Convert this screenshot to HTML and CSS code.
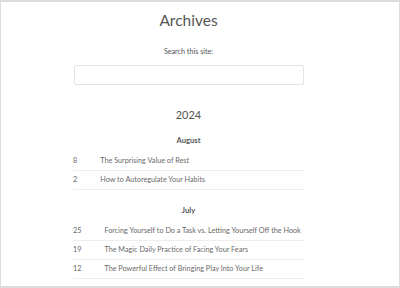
FILE: index.html
```html
<!DOCTYPE html>
<html lang="en">
  <head>
    <meta charset="UTF-8" />
    <title>Archives</title>
    <link rel="stylesheet" href="styles.css">
  </head>
  <body>
    <div class="page">
      <div class="content">
        <h1 class="title">Archives</h1>
        <form class="search">
          <label for="q">Search this site:</label>
          <input id="q" type="text">
        </form>

        <h2 class="year">2024</h2>

        <h3 class="month">August</h3>
        <table class="posts">
          <tr><td class="day">8</td><td><a href="#">The Surprising Value of Rest</a></td></tr>
          <tr><td class="day">2</td><td><a href="#">How to Autoregulate Your Habits</a></td></tr>
        </table>

        <h3 class="month">July</h3>
        <table class="posts">
          <tr><td class="day">25</td><td><a href="#">Forcing Yourself to Do a Task vs. Letting Yourself Off the Hook</a></td></tr>
          <tr><td class="day">19</td><td><a href="#">The Magic Daily Practice of Facing Your Fears</a></td></tr>
          <tr><td class="day">12</td><td><a href="#">The Powerful Effect of Bringing Play Into Your Life</a></td></tr>
        </table>
      </div>
    </div>
  </body>
</html>
```

FILE: styles.css
```css
html, body {
  margin: 0;
  height: 100%;
}
body {
  font-family: Lato, "Open Sans", sans-serif;
  color: #555;
  background-color: #fff;
}
.page {
  box-sizing: border-box;
  height: 288px;
  overflow: hidden;
  border: 1px solid #ddd;
  border-top-width: 2px;
  border-bottom-width: 2px;
}
.content {
  width: 231px;
  margin: 0 0 0 72px;
}
.title {
  margin: 7px 0 0;
  font-size: 15.5px;
  font-weight: 400;
  line-height: 22px;
  text-align: center;
  color: #555;
}
.search {
  margin-top: 15px;
  text-align: center;
}
.search label {
  display: block;
  font-size: 7.2px;
  line-height: 12px;
  color: #555;
}
.search input {
  display: block;
  box-sizing: border-box;
  width: 230px;
  height: 20px;
  margin: 7px 0 0 1px;
  border: 1px solid #e4e4e4;
  border-radius: 2px;
}
.year {
  margin: 20px 0 0;
  font-size: 11px;
  font-weight: 400;
  line-height: 20px;
  text-align: center;
  color: #555;
}
.month {
  margin: 9px 0 6px;
  font-size: 7.6px;
  font-weight: 700;
  line-height: 12px;
  text-align: center;
  color: #555;
}
.posts {
  width: 100%;
  border-collapse: collapse;
  margin-bottom: 14px;
}
.posts td {
  padding: 4px 0;
  height: 10px;
  font-size: 7.25px;
  line-height: 10px;
  border-bottom: 1px solid #eee;
  color: #6a6a6a;
  white-space: nowrap;
}
.posts td.day {
  width: 1px;
  padding-right: 23px;
}
.posts a {
  color: #6a6a6a;
  text-decoration: none;
}
```
